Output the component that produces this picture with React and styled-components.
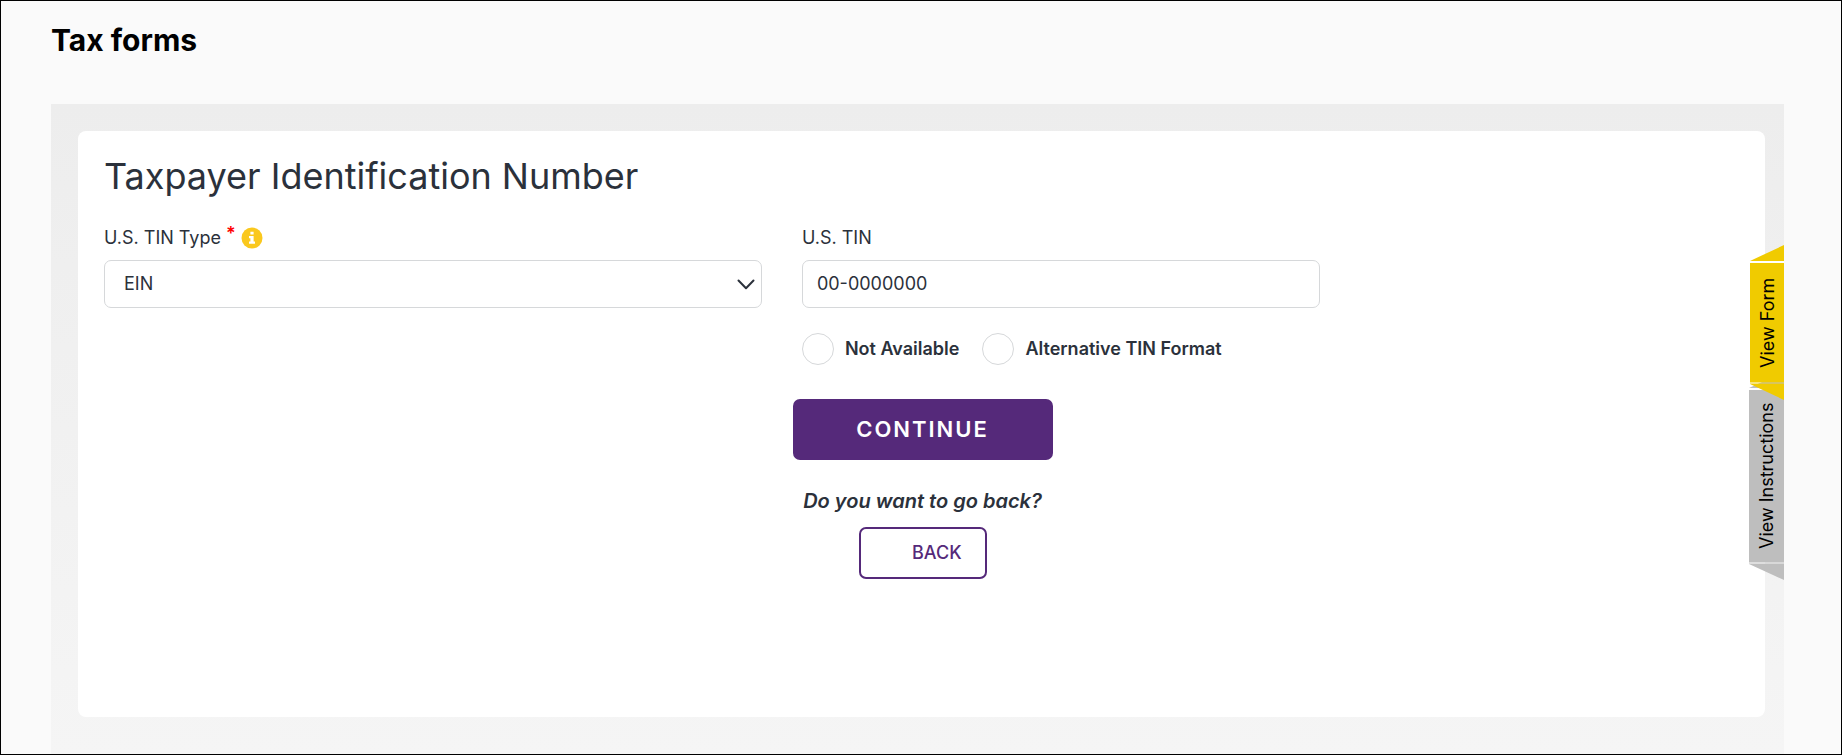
import React from "react";
import styled, { createGlobalStyle } from "styled-components";

const GlobalStyle = createGlobalStyle`
  *, *::before, *::after { box-sizing: border-box; }
  body { margin: 0; background: #fafafa; }
  body, button, input, select {
    font-family: Inter, "Open Sans", "Liberation Sans", sans-serif;
    color: #2b313b;
  }
`;

const Page = styled.div`
  min-height: 100vh;
  display: flex;
  flex-direction: column;
  border: 1px solid #000;
  background: #fafafa;
`;

const PageTitle = styled.h1`
  margin: 0;
  padding: 19px 50px 44px;
  font-size: 30px;
  line-height: 40px;
  font-weight: 700;
  color: #000;
`;

const Panel = styled.main`
  position: relative;
  flex: 1;
  display: flex;
  flex-direction: column;
  margin: 0 57px 0 50px;
  padding: 27px 19px 37px 27px;
  background: linear-gradient(#ededed, #f5f5f5);
`;

const Card = styled.form`
  flex: 1;
  padding: 25px 26px;
  border-radius: 8px;
  background: #fff;
`;

const CardTitle = styled.h2`
  margin: 0 0 26px;
  font-size: 36px;
  line-height: 40px;
  font-weight: 400;
`;

const Fields = styled.div`
  display: grid;
  grid-template-columns: repeat(12, minmax(0, 1fr));
  column-gap: 40px;
`;

const Field = styled.div`
  grid-column: span ${(p) => p.$span};
`;

const LabelRow = styled.div`
  display: flex;
  align-items: center;
  gap: 5px;
  height: 32px;
  margin-bottom: 6px;
  font-size: 18px;
  line-height: 24px;
`;

const Required = styled.span`
  align-self: flex-start;
  font-size: 18px;
  line-height: 24px;
  font-weight: 600;
  color: #f00;
`;

const InfoIcon = styled.svg`
  display: block;
  width: 22px;
  height: 22px;
`;

const SelectWrap = styled.div`
  display: grid;
  align-items: center;
  > * { grid-area: 1 / 1; }
`;

const Select = styled.select`
  appearance: none;
  width: 100%;
  height: 48px;
  padding: 0 40px 2px 19px;
  border: 1px solid #d6d8da;
  border-radius: 7px;
  background: #fff;
  font-size: 18px;
`;

const Chevron = styled.svg`
  justify-self: end;
  width: 18px;
  height: 11px;
  margin-right: 7px;
  pointer-events: none;
`;

const TextInput = styled.input`
  display: block;
  width: 100%;
  height: 48px;
  padding: 0 14px 2px;
  border: 1px solid #d6d8da;
  border-radius: 7px;
  background: #fff;
  font-size: 18px;
`;

const Options = styled.div`
  display: flex;
  gap: 23px;
  margin-top: 25px;
`;

const Option = styled.label`
  display: flex;
  align-items: center;
  gap: 11px;
  font-size: 18px;
  line-height: 32px;
  font-weight: 600;
  white-space: nowrap;
`;

const Radio = styled.input`
  appearance: none;
  flex: none;
  width: 32px;
  height: 32px;
  margin: 0;
  border: 1px solid #d6d8da;
  border-radius: 50%;
  background: #fff;
  &:checked { border: 10px solid #55297a; }
`;

const Actions = styled.div`
  display: flex;
  flex-direction: column;
  align-items: center;
  margin-top: 34px;
  padding-left: 2px;
`;

const Continue = styled.button`
  width: 260px;
  height: 61px;
  padding: 0 0 2px;
  border: 0;
  border-radius: 7px;
  background: #55297a;
  color: #fff;
  font-size: 22px;
  font-weight: 600;
  letter-spacing: 2px;
`;

const BackPrompt = styled.p`
  margin: 29px 0 14px;
  font-size: 20px;
  line-height: 24px;
  font-style: italic;
  font-weight: 600;
`;

const Back = styled.button`
  width: 128px;
  height: 52px;
  padding: 0 23px 2px;
  border: 2px solid #55297a;
  border-radius: 7px;
  background: #fff;
  color: #55297a;
  font-size: 18px;
  font-weight: 500;
  text-align: right;
`;

const SideTabs = styled.nav`
  position: absolute;
  top: 141px;
  right: 0;
  display: flex;
  flex-direction: column;
  align-items: flex-end;
`;

const SideTab = styled.button`
  position: relative;
  z-index: ${(p) => p.$layer};
  display: grid;
  grid-template-rows: 16px 2px ${(p) => p.$length} 2px 16px;
  width: ${(p) => p.$width};
  margin: 0 0 -28px;
  padding: 0;
  border: 0;
  background: none;
  color: #000;
  font-size: 18px;
`;

const TabFold = styled.span`
  grid-row: ${(p) => (p.$end ? 5 : 1)};
  background: ${(p) => p.$color};
  clip-path: ${(p) =>
    p.$end ? "polygon(0 0, 100% 0, 100% 100%)" : "polygon(0 100%, 100% 0, 100% 100%)"};
`;

const TabEdge = styled.span`
  grid-row: ${(p) => (p.$end ? 4 : 2)};
  background: ${(p) => (p.$end ? p.$color : "#fff")};
  opacity: ${(p) => (p.$end ? 0.5 : 1)};
`;

const TabFace = styled.span`
  grid-row: 3;
  display: flex;
  align-items: center;
  justify-content: center;
  background: ${(p) => p.$color};
  writing-mode: vertical-rl;
  transform: rotate(180deg);
  white-space: nowrap;
`;

function Tab({ label, color, ...size }) {
  return (
    <SideTab type="button" {...size}>
      <TabFold $color={color} />
      <TabEdge $color={color} />
      <TabFace $color={color}>{label}</TabFace>
      <TabEdge $color={color} $end />
      <TabFold $color={color} $end />
    </SideTab>
  );
}

export default function App() {
  return (
    <Page>
      <GlobalStyle />
      <PageTitle>Tax forms</PageTitle>
      <Panel>
        <Card onSubmit={(e) => e.preventDefault()}>
          <CardTitle>Taxpayer Identification Number</CardTitle>
          <Fields>
            <Field $span={5}>
              <LabelRow>
                <label htmlFor="tin-type">U.S. TIN Type</label>
                <Required>*</Required>
                <InfoIcon viewBox="0 0 22 22" role="img" aria-label="Information">
                  <circle cx="11" cy="11" r="10.5" fill="#fac81e" />
                  <path d="M9.4 4.8h3.2v2.8H9.4zM8 9.1h4.6v5.4H14v2.2H8v-2.2h1.4v-3.2H8z" fill="#fff" />
                </InfoIcon>
              </LabelRow>
              <SelectWrap>
                <Select id="tin-type" defaultValue="EIN">
                  <option>EIN</option>
                </Select>
                <Chevron viewBox="0 0 18 11" aria-hidden="true">
                  <path d="M1.5 1.5 9 9.2l7.500-7.700" fill="none" stroke="#2b313b" strokeWidth="2" strokeLinecap="round" strokeLinejoin="round" />
                </Chevron>
              </SelectWrap>
            </Field>
            <Field $span={4}>
              <LabelRow>
                <label htmlFor="tin">U.S. TIN</label>
              </LabelRow>
              <TextInput id="tin" defaultValue="00-0000000" />
              <Options>
                <Option>
                  <Radio type="radio" name="tin-option" />
                  Not Available
                </Option>
                <Option>
                  <Radio type="radio" name="tin-option" />
                  Alternative TIN Format
                </Option>
              </Options>
            </Field>
          </Fields>
          <Actions>
            <Continue type="submit">CONTINUE</Continue>
            <BackPrompt>Do you want to go back?</BackPrompt>
            <Back type="button">BACK</Back>
          </Actions>
        </Card>
        <SideTabs>
          <Tab label="View Form" color="#f0cb00" $length="119px" $width="34px" $layer={2} />
          <Tab label="View Instructions" color="#bebebe" $length="172px" $width="35px" $layer={1} />
        </SideTabs>
      </Panel>
    </Page>
  );
}
